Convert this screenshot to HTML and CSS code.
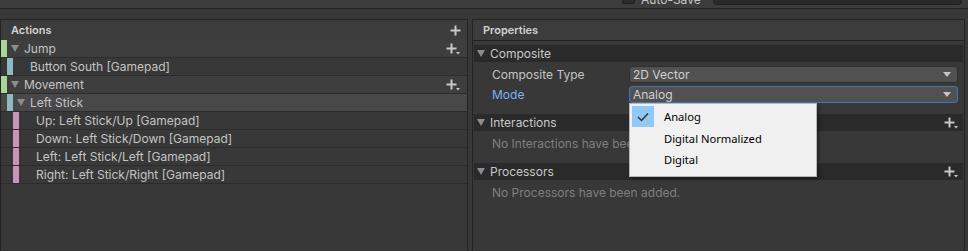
FILE: index.html
```html
<!DOCTYPE html>
<html>
<head>
<meta charset="utf-8"/>
<title>Input Actions</title>
<link rel="stylesheet" href="styles.css">
</head>
<body>
<div class="toolbar">
    <label class="autosave"><span class="chk"></span>Auto-Save</label>
    <div class="search"><span class="glass">&lsaquo;</span></div>
</div>
<div class="main">
    <!-- actions tree -->
    <section class="panel p-actions">
        <div class="panel-head">
            <span>Actions</span>
            <svg class="ico-plus" width="11" height="11" viewBox="0 0 11 11"><path d="M5.5 0.5v10M0.5 5.5h10"/></svg>
        </div>
        <ul class="tree">
            <li class="row act">
                <i class="bar green"></i><i class="tri"></i><span>Jump</span>
                <svg class="ico-plus more" width="14" height="12" viewBox="0 0 14 12"><path d="M5.5 0.5v10M0.5 5.5h10"/><polygon points="10,9 14,9 12,11.5"/></svg>
            </li>
            <li class="row bind"><i class="bar blue"></i><span>Button South [Gamepad]</span></li>
            <li class="row act">
                <i class="bar green"></i><i class="tri"></i><span>Movement</span>
                <svg class="ico-plus more" width="14" height="12" viewBox="0 0 14 12"><path d="M5.5 0.5v10M0.5 5.5h10"/><polygon points="10,9 14,9 12,11.5"/></svg>
            </li>
            <li class="row comp sel"><i class="bar blue"></i><i class="tri"></i><span>Left Stick</span></li>
            <li class="row part"><i class="bar pink"></i><span>Up: Left Stick/Up [Gamepad]</span></li>
            <li class="row part"><i class="bar pink"></i><span>Down: Left Stick/Down [Gamepad]</span></li>
            <li class="row part"><i class="bar pink"></i><span>Left: Left Stick/Left [Gamepad]</span></li>
            <li class="row part"><i class="bar pink"></i><span>Right: Left Stick/Right [Gamepad]</span></li>
        </ul>
    </section>
    <!-- properties -->
    <section class="panel p-props">
        <div class="panel-head"><span>Properties</span></div>
        <div class="props">
            <div class="fold"><i class="tri"></i><span>Composite</span></div>
            <div class="field">
                <label>Composite Type</label>
                <div class="select"><span>2D Vector</span><i class="arrow"></i></div>
            </div>
            <div class="field focus">
                <label>Mode</label>
                <div class="select"><span>Analog</span><i class="arrow"></i></div>
            </div>
            <div class="fold gap">
                <i class="tri"></i><span>Interactions</span>
                <svg class="ico-plus more" width="14" height="12" viewBox="0 0 14 12"><path d="M5.5 0.5v10M0.5 5.5h10"/><polygon points="10,9 14,9 12,11.5"/></svg>
            </div>
            <p class="empty">No Interactions have been added.</p>
            <div class="fold">
                <i class="tri"></i><span>Processors</span>
                <svg class="ico-plus more" width="14" height="12" viewBox="0 0 14 12"><path d="M5.5 0.5v10M0.5 5.5h10"/><polygon points="10,9 14,9 12,11.5"/></svg>
            </div>
            <p class="empty">No Processors have been added.</p>
        </div>
    </section>
</div>
<!-- open dropdown menu -->
<ul class="popup">
    <li class="on"><i class="check"><svg width="12" height="10" viewBox="0 0 12 10"><path d="M1 5l3.5 3.5L11 1.5"/></svg></i>Analog</li>
    <li><i class="check"></i>Digital Normalized</li>
    <li><i class="check"></i>Digital</li>
</ul>
</body>
</html>
```

FILE: styles.css
```css
/* reset */
html,body,ul,li,p,label{margin:0;padding:0;}
li{list-style:none;}
body{background-color:#383838;color:#c4c4c4;font:12px/1 Inter,"Noto Sans",sans-serif;width:968px;height:251px;overflow:hidden;position:relative;}

/* toolbar (scrolled off, only the bottom shows) */
.toolbar{height:8px;border-bottom:1px solid #232323;background-color:#3c3c3c;display:flex;align-items:flex-end;overflow:hidden;}
.autosave{display:flex;align-items:center;margin:0 0 -1px 622px;height:18px;color:#c4c4c4;}
.autosave .chk{width:11px;height:11px;border:1px solid #202020;border-radius:2px;background-color:#2a2a2a;margin-right:6px;margin-top:-6px;}
.search{margin:0 6px 3px auto;width:247px;height:16px;border:1px solid #202020;border-radius:4px;background-color:#2a2a2a;display:flex;align-items:center;}
.search .glass{margin-left:7px;margin-top:-6px;color:#9a9a9a;font-size:11px;}

.main{display:flex;gap:4px;padding-top:10px;height:232px;}
.panel{border:1px solid #232323;border-bottom:0;background-color:#383838;}
.p-actions{width:466px;}
.p-props{width:491px;}
.panel-head{height:20px;display:flex;align-items:center;justify-content:space-between;padding:1px 6px 0 10px;box-sizing:border-box;background-color:#3c3c3c;font-size:11px;font-weight:600;color:#d2d2d2;}
.p-props .panel-head{border-bottom:1px solid #232323;height:21px;}

.ico-plus{display:block;}
.ico-plus path{stroke:#c8c8c8;stroke-width:2;fill:none;}
.ico-plus polygon{fill:#c8c8c8;}

/* tree */
.tree .row{height:17px;border-bottom:1px solid #2c2c2c;display:flex;align-items:center;background-color:#383838;position:relative;}
.tree .row span{padding-top:1px;}
.tree .row.act{background-color:#3e3e3e;}
.tree .row.sel{background-color:#484848;}
.bar{width:6px;align-self:stretch;flex:none;}
.bar.green{background-color:#a6d69a;}
.bar.blue{background-color:#8fbac2;}
.bar.pink{background-color:#c894b7;}
.tri{width:0;height:0;border-left:4px solid transparent;border-right:4px solid transparent;border-top:7px solid #8c8c8c;flex:none;}
.row .tri{margin:0 5px 0 4px;}
.row.bind .bar,.row.comp .bar{margin-left:6px;}
.row.part .bar{margin-left:12px;}
.row.bind span,.row.part span{margin-left:17px;}
.row .more{position:absolute;right:7px;top:3px;}

/* properties */
.props{padding:4px 1px 0;}
.fold{height:17px;background-color:#2a2a2a;display:flex;align-items:center;position:relative;color:#c8c8c8;}
.fold .tri{margin:0 5px 0 3px;}
.fold .more{position:absolute;right:5px;top:3px;}
.fold.gap{margin-top:11px;}
.field{display:flex;align-items:center;margin-top:3px;height:17px;}
.fold + .field{margin-top:4px;}
.field label{width:137px;padding-left:18px;flex:none;}
.field.focus label{color:#7eaff4;}
.select{box-sizing:border-box;width:329px;height:17px;border:1px solid #303030;border-radius:3px;background-color:#515151;display:flex;align-items:center;justify-content:space-between;padding:0 6px 0 3px;color:#d0d0d0;}
.field.focus .select{border-color:#3a79bb;}
.arrow{width:0;height:0;border-left:4px solid transparent;border-right:4px solid transparent;border-top:5px solid #c4c4c4;}
.empty{height:32px;line-height:26px;padding-left:18px;color:#7f7f7f;}

/* dropdown popup */
.popup{position:absolute;left:629px;top:103px;width:186px;height:70px;background-color:#f0f0f0;border:1px solid #b8b8b8;box-shadow:2px 2px 3px rgba(0,0,0,.35);padding-top:2px;font-family:"Noto Sans",sans-serif;font-size:11.2px;color:#000;}
.popup li{height:21.5px;display:flex;align-items:center;}
.popup .check{width:22px;height:21px;margin:0 10px 0 2px;display:flex;align-items:center;justify-content:center;}
.popup li.on .check{background-color:#90c8f6;}
.popup .check path{stroke:#333;stroke-width:1.5;fill:none;}
```
